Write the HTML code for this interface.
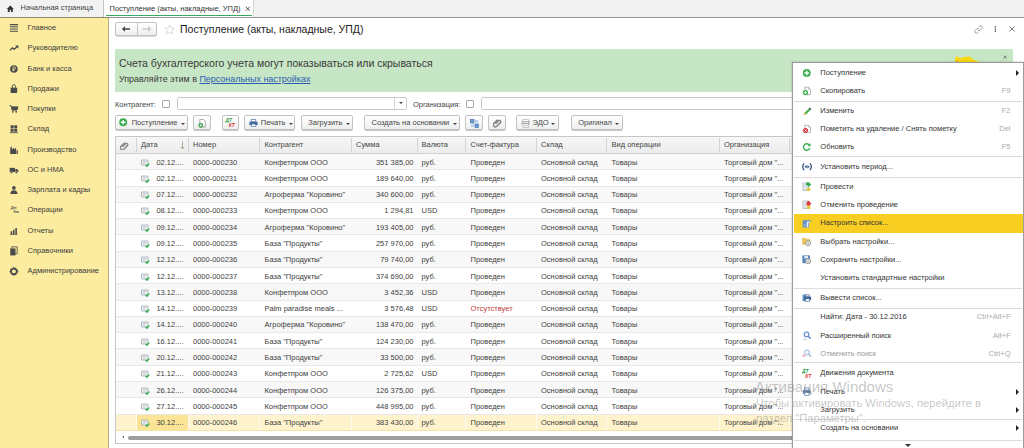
<!DOCTYPE html>
<html lang="ru"><head><meta charset="utf-8"><title>Поступление (акты, накладные, УПД)</title>
<style>
*{box-sizing:border-box;margin:0;padding:0}
html,body{width:1024px;height:448px;overflow:hidden;background:#fff}
body{position:relative;font-family:"Liberation Sans",sans-serif;font-size:7.5px;color:#333}
.abs{position:absolute}
.t{position:absolute;white-space:nowrap;line-height:10px;height:10px}
#tabs{left:0;top:0;width:1024px;height:17px;background:#f2f2f2}
#side{left:0;top:17px;width:109px;height:431px;background:#fbec9f;border-right:1px solid #b9ae7e}
#side .t{left:27.500px;color:#3b3b3b}
#topline{left:0;top:17px;width:1024px;height:1px;background:#969696}
.btn{position:absolute;height:14.500px;border:1px solid #c3c3c3;border-radius:2px;background:linear-gradient(#ffffff,#eeeeee);box-shadow:0 0.700px 0 #b0b0b0;}
.btn .t{top:2px;color:#444}
.car{position:absolute;top:7px;width:0;height:0;border-left:2px solid transparent;border-right:2px solid transparent;border-top:2.500px solid #444}
.inp{position:absolute;height:13px;border:1px solid #c9c9c9;border-radius:2px;background:#fff}
.cb{position:absolute;width:7.600px;height:7.600px;border:1px solid #a8a8a8;border-radius:1px;background:#fff}
#grid{left:115px;top:136px;width:909px;height:308px;border:1px solid #c6c6c6;background:#fff;overflow:hidden}
.row{position:absolute;left:0;width:909px;height:16.300px;border-bottom:1px solid #e8e8e8}
.row.o{background:#f8f8f8}
.row .t{top:3.600px;color:#404040}
.hd{position:absolute;left:0;top:0;width:909px;height:16.500px;background:linear-gradient(#f7f7f7,#ececec);border-bottom:1px solid #d2d2d2}
.hd .t{top:3px;color:#444}
.vs{position:absolute;top:1px;width:1px;height:14px;background:#d4d4d4}
#menu{left:792px;top:62px;width:231.500px;height:392px;background:#fff;border:1px solid #9c9c9c;box-shadow:0 0 2px rgba(0,0,0,.25)}
#menu .t{left:27.300px;color:#333}
#menu .k{position:absolute;right:12px;color:#aaa;white-space:nowrap;line-height:10px;height:10px}
.sep{position:absolute;left:1px;width:228px;height:1px;background:#dcdcdc}
.arr{position:absolute;left:222.600px;width:0;height:0;border-top:3px solid transparent;border-bottom:3px solid transparent;border-left:3.500px solid #222}
.wm{position:absolute;white-space:nowrap;color:rgba(135,135,135,.47)}
</style></head><body>

<div id="tabs" class="abs">
<svg class="abs" style="left:5.800px;top:4.600px" width="8.600" height="7.600" viewBox="0 0 10 10"><path d="M5 0.800L0.300 5.200h1.400v4h2.500V6.400h1.600v2.800h2.500v-4h1.400z" fill="#333"/></svg>
<div class="t" style="left:20.500px;top:3.300px;color:#444">Начальная страница</div>
<div class="abs" style="left:103px;top:0;width:151px;height:17px;background:#fff;border-left:1px solid #c4c4c4;border-right:1px solid #d4d4d4"></div>
<div class="abs" style="left:105.700px;top:15px;width:146px;height:1px;background:#35a862;z-index:3"></div>
<div class="t" style="left:109.500px;top:3.500px;color:#333">Поступление (акты, накладные, УПД)</div>
<svg class="abs" style="left:245px;top:5.800px" width="5.600" height="5.600" viewBox="0 0 7 7"><path d="M1 1l5 5M6 1l-5 5" stroke="#444" stroke-width="1.100"/></svg>
</div>
<div id="side" class="abs">
<svg class="abs" style="left:8.800px;top:6.0px" width="9.800" height="9.800" viewBox="0 0 12 12"><path d="M1 2h10M1 4.7h10M1 7.4h10M1 10h10" stroke="#4a4a4a" stroke-width="1.3" fill="none"/></svg>
<div class="t" style="top:6.0px">Главное</div>
<svg class="abs" style="left:8.800px;top:26.3px" width="9.800" height="9.800" viewBox="0 0 12 12"><path d="M1 9l3.2-3.2 2.2 2 3.8-4" stroke="#4a4a4a" stroke-width="1.5" fill="none"/><path d="M7.5 3h4v4z" fill="#4a4a4a"/></svg>
<div class="t" style="top:26.3px">Руководителю</div>
<svg class="abs" style="left:8.800px;top:46.5px" width="9.800" height="9.800" viewBox="0 0 12 12"><circle cx="6" cy="6" r="4.6" fill="#4a4a4a"/><path d="M5 9V3.6h1.6a1.4 1.4 0 0 1 0 2.8H4.2M4.2 7.7h2.6" stroke="#fbec9f" stroke-width="0.9" fill="none"/></svg>
<div class="t" style="top:46.5px">Банк и касса</div>
<svg class="abs" style="left:8.800px;top:66.8px" width="9.800" height="9.800" viewBox="0 0 12 12"><path d="M2 4.5h8v6.5h-8z" fill="#4a4a4a"/><path d="M4.2 5V2.6a1.8 1.8 0 0 1 3.6 0V5" stroke="#4a4a4a" stroke-width="1" fill="none"/></svg>
<div class="t" style="top:66.8px">Продажи</div>
<svg class="abs" style="left:8.800px;top:87.1px" width="9.800" height="9.800" viewBox="0 0 12 12"><path d="M0.5 2h2l1.2 5.5h6l1.3-4h-8" stroke="#4a4a4a" stroke-width="1.2" fill="none"/><path d="M3.3 3.7h7.5l-1.2 3.6h-5.6z" fill="#4a4a4a"/><circle cx="4.6" cy="9.6" r="1.1" fill="#4a4a4a"/><circle cx="8.8" cy="9.6" r="1.1" fill="#4a4a4a"/></svg>
<div class="t" style="top:87.1px">Покупки</div>
<svg class="abs" style="left:8.800px;top:107.3px" width="9.800" height="9.800" viewBox="0 0 12 12"><path d="M2 1.5h3.6v3.6h-3.6zM6.4 1.5h3.6v3.6h-3.6zM2 5.9h3.6v3.6h-3.6zM6.4 5.9h3.6v3.6h-3.6z" fill="#4a4a4a"/><path d="M1 10.6h10" stroke="#4a4a4a" stroke-width="1"/></svg>
<div class="t" style="top:107.3px">Склад</div>
<svg class="abs" style="left:8.800px;top:127.6px" width="9.800" height="9.800" viewBox="0 0 12 12"><path d="M1.5 11V3.5l2-2v4l2.6-2.2v2.2l2.6-2.2V11z" fill="#4a4a4a"/><path d="M9.2 11V6.5h1.6V11z" fill="#4a4a4a"/></svg>
<div class="t" style="top:127.6px">Производство</div>
<svg class="abs" style="left:8.800px;top:147.9px" width="9.800" height="9.800" viewBox="0 0 12 12"><path d="M0.8 3.5h6.6v5.2h-6.6z" fill="#4a4a4a"/><path d="M7.8 5h2.2l1.4 1.8v1.9h-3.6z" fill="#4a4a4a"/><circle cx="3" cy="9.2" r="1.3" fill="#4a4a4a" stroke="#fbec9f" stroke-width="0.5"/><circle cx="9" cy="9.2" r="1.3" fill="#4a4a4a" stroke="#fbec9f" stroke-width="0.5"/></svg>
<div class="t" style="top:147.9px">ОС и НМА</div>
<svg class="abs" style="left:8.800px;top:168.2px" width="9.800" height="9.800" viewBox="0 0 12 12"><circle cx="6" cy="3.6" r="2.3" fill="#4a4a4a"/><path d="M1.6 11c0-3 1.6-4.6 4.4-4.6s4.4 1.600 4.400 4.600z" fill="#4a4a4a"/></svg>
<div class="t" style="top:168.2px">Зарплата и кадры</div>
<svg class="abs" style="left:8.800px;top:188.4px" width="9.800" height="9.800" viewBox="0 0 12 12"><text x="2" y="5.500" font-size="4.600" font-weight="bold" font-style="italic" fill="#5a5a55" font-family="Liberation Sans, sans-serif">Дт</text><text x="5.500" y="10" font-size="4.600" font-weight="bold" font-style="italic" fill="#5a5a55" font-family="Liberation Sans, sans-serif">Кт</text></svg>
<div class="t" style="top:188.4px">Операции</div>
<svg class="abs" style="left:8.800px;top:208.7px" width="9.800" height="9.800" viewBox="0 0 12 12"><path d="M2 6.500h1.900v3.800h-1.900zM4.900 4.500h1.900v5.800h-1.900zM7.800 2.300h1.900v8h-1.900z" fill="#4a4a4a"/><path d="M1.300 10.600h9.200" stroke="#4a4a4a" stroke-width="0.900"/></svg>
<div class="t" style="top:208.7px">Отчеты</div>
<svg class="abs" style="left:8.800px;top:229.0px" width="9.800" height="9.800" viewBox="0 0 12 12"><path d="M3.500 1h6.500v8.500h-6.500z" fill="none" stroke="#4a4a4a" stroke-width="1"/><path d="M1.500 3h6.500v8.500h-6.500z" fill="#4a4a4a"/></svg>
<div class="t" style="top:229.0px">Справочники</div>
<svg class="abs" style="left:8.800px;top:249.2px" width="9.800" height="9.800" viewBox="0 0 12 12"><path d="M6 0.800l1 1.500 1.700-.5.300 1.800 1.800.3-.5 1.700 1.500 1-1.500 1 .5 1.700-1.800.3-.3 1.800-1.700-.5-1 1.500-1-1.500-1.700.5-.3-1.800-1.800-.3.5-1.700-1.500-1 1.500-1-.5-1.700 1.800-.3.300-1.800 1.700.5z" fill="#4a4a4a"/><circle cx="6" cy="6.600" r="2.400" fill="#fbec9f"/></svg>
<div class="t" style="top:249.2px">Администрирование</div>
</div>
<div id="topline" class="abs"></div><div class="abs" style="left:0;top:17px;width:109px;height:1px;background:#8e8868"></div>
<div class="btn" style="left:115px;top:22px;width:42px;height:14px;box-shadow:0 0.500px 0 #b5b5b5"></div>
<div class="abs" style="left:136.500px;top:23px;width:1px;height:12px;background:#c4c4c4"></div>
<svg class="abs" style="left:121px;top:25px" width="10" height="8" viewBox="0 0 10 8"><path d="M0.800 4l3.200-2.800v2h5v1.600H4v2z" fill="#4a4a4a"/></svg>
<svg class="abs" style="left:142px;top:25px" width="10" height="8" viewBox="0 0 10 8"><path d="M9.500 4l-3.500-3v2.300H0.500v1.400H6V7z" fill="#c9c9c9"/></svg>
<svg class="abs" style="left:164px;top:23.500px" width="11" height="11" viewBox="0 0 11 11"><path d="M5.500 0.800l1.400 3.100 3.400.4-2.500 2.300.7 3.300-3-1.700-3 1.700.7-3.300L0.700 4.300l3.400-.4z" fill="#fff" stroke="#d2d2d2" stroke-width="0.800"/></svg>
<div class="t" style="left:180px;top:22px;font-size:10.500px;line-height:14px;height:14px;color:#222">Поступление (акты, накладные, УПД)</div>
<svg class="abs" style="left:973.500px;top:25px" width="9" height="9" viewBox="0 0 10 10"><path d="M4.200 5.800a1.800 1.800 0 0 0 2.600 0l1.800-1.800a1.800 1.800 0 0 0-2.600-2.600l-.8.800M5.800 4.200a1.800 1.800 0 0 0-2.600 0L1.400 6a1.800 1.800 0 0 0 2.600 2.600l.8-.8" fill="none" stroke="#8a8a8a" stroke-width="0.900"/></svg>
<svg class="abs" style="left:993px;top:25px" width="4" height="9" viewBox="0 0 4 9"><rect x="1.700" y="1.300" width="1.300" height="1.300" fill="#555"/><rect x="1.700" y="3.500" width="1.300" height="1.300" fill="#555"/><rect x="1.700" y="5.700" width="1.300" height="1.300" fill="#555"/></svg>
<svg class="abs" style="left:1009px;top:26.300px" width="6" height="6" viewBox="0 0 7 7"><path d="M0.500 0.500l6 6M6.500 0.500l-6 6" stroke="#555" stroke-width="0.900"/></svg>
<div class="abs" style="left:115px;top:49px;width:897.500px;height:43px;background:#c7e6c5"></div>
<div class="t" style="left:119px;top:56px;font-size:10.500px;line-height:14px;height:14px;color:#3a3a3a">Счета бухгалтерского учета могут показываться или скрываться</div>
<div class="t" style="left:119px;top:72.500px;font-size:8.950px;line-height:12px;height:12px;color:#3a3a3a">Управляйте этим в <span style="color:#2a5db0;text-decoration:underline">Персональных настройках</span></div>
<svg class="abs" style="left:945px;top:55px" width="40" height="8" viewBox="0 0 40 8"><path d="M10 7.500V3.500c0-1.500 1.500-2 3-1.500l3 1.200 3-1.500 2 .3 2-.6 2 .3 3 2.500 3 1.500 5.500 1.800z" fill="#fbd811"/><circle cx="12" cy="6.500" r="1" fill="#f59a1b"/><circle cx="2.500" cy="7.300" r="0.700" fill="#f3d95a"/></svg>
<svg class="abs" style="left:1003px;top:55px" width="4.200" height="4.200" viewBox="0 0 5 5"><path d="M0.700 0.700l3.600 3.600M4.300 0.700L0.700 4.300" stroke="#666" stroke-width="1"/></svg>
<div class="t" style="left:115px;top:99.800px;color:#444">Контрагент:</div>
<div class="cb" style="left:162.400px;top:100.400px"></div>
<div class="inp" style="left:177px;top:97px;width:230px"></div>
<div class="abs" style="left:394px;top:98px;width:1px;height:11px;background:#d5d5d5"></div>
<div class="car" style="left:398.600px;top:102.300px;border-left-width:2px;border-right-width:2px;border-top-width:2.500px"></div>
<div class="t" style="left:413px;top:99.800px;color:#444">Организация:</div>
<div class="cb" style="left:466.400px;top:100.400px"></div>
<div class="inp" style="left:480.500px;top:97px;width:330px"></div>
<div class="btn" style="left:115px;top:115px;width:72.5px"><div class="t" style="left:15.7px">Поступление</div><div class="car" style="left:65px;top:6.500px"></div><svg class="abs" style="left:3.300px;top:2.300px" width="8.400" height="8.400" viewBox="0 0 8 8"><circle cx="4" cy="4" r="3.800" fill="#3aae4e"/><path d="M4 1.800v4.400M1.800 4h4.400" stroke="#fff" stroke-width="1.300"/></svg></div>
<div class="btn" style="left:193px;top:115px;width:17.5px"><svg class="abs" style="left:4px;top:3px" width="8.200" height="9" viewBox="0 0 9 10"><path d="M2 0.500h4l2 2v6.500h-6z" fill="#fff" stroke="#8a8a8a" stroke-width="0.800"/><circle cx="3" cy="7" r="2.600" fill="#2f9e44"/><path d="M3 5.600v2.800M1.600 7h2.800" stroke="#fff" stroke-width="0.900"/></svg></div>
<div class="btn" style="left:222px;top:115px;width:17px"><div class="abs" style="left:2.500px;top:2px;font-size:4.800px;line-height:5px;font-weight:bold;color:#2f9e44;font-style:italic">ДТ</div><div class="abs" style="left:5.800px;top:6.500px;font-size:4.800px;line-height:5px;font-weight:bold;color:#e03131;font-style:italic">КТ</div></div>
<div class="btn" style="left:244px;top:115px;width:51px"><div class="t" style="left:15.8px">Печать</div><div class="car" style="left:43.5px;top:6.500px"></div><svg class="abs" style="left:3.500px;top:2.800px" width="9" height="8.200" viewBox="0 0 10 9"><path d="M2.500 0.500h5v2.500h-5z" fill="#fff" stroke="#456a9c" stroke-width="0.800"/><path d="M0.500 3h9v3.800h-9z" fill="#456a9c"/><path d="M2.500 5.500h5v3h-5z" fill="#fff" stroke="#456a9c" stroke-width="0.800"/></svg></div>
<div class="btn" style="left:301px;top:115px;width:51.5px"><div class="t" style="left:6.2px">Загрузить</div><div class="car" style="left:43.7px;top:6.500px"></div></div>
<div class="btn" style="left:364px;top:115px;width:96px"><div class="t" style="left:6.5px">Создать на основании</div><div class="car" style="left:87.5px;top:6.500px"></div></div>
<div class="btn" style="left:465px;top:115px;width:17.5px"><svg class="abs" style="left:4px;top:2.500px" width="9" height="9" viewBox="0 0 9 9"><rect x="0.500" y="0.500" width="3.500" height="3.500" fill="#6f9bd1" stroke="#3b6aa8" stroke-width="0.600"/><rect x="5" y="5" width="3.500" height="3.500" fill="#6f9bd1" stroke="#3b6aa8" stroke-width="0.600"/><rect x="5" y="1" width="3" height="2.500" fill="#b7d0ee"/><rect x="1" y="5.500" width="3" height="2.500" fill="#b7d0ee"/></svg></div>
<div class="btn" style="left:488px;top:115px;width:17.5px"><svg class="abs" style="left:3.500px;top:2.300px" width="9.500" height="9.500" viewBox="0 0 9 9"><path d="M2.400 5.400l2.800-2.800a1.200 1.200 0 0 1 1.800 1.800L3.600 7.800a1.900 1.900 0 0 1-2.700-2.700L4.400 1.600" fill="none" stroke="#858585" stroke-width="1.400"/></svg></div>
<div class="btn" style="left:516px;top:115px;width:42.5px"><div class="t" style="left:15.5px">ЭДО</div><div class="car" style="left:34.2px;top:6.500px"></div><svg class="abs" style="left:3.500px;top:2.800px" width="9.500" height="9" viewBox="0 0 9.500 9"><path d="M2 0.500h5.500v8h-5.500z" fill="#fafafa" stroke="#b5b5b5" stroke-width="0.700"/><path d="M0.300 2.800h8.900M0.300 4.600h8.900" stroke="#9c9c9c" stroke-width="0.900"/><path d="M2.800 6.600h4" stroke="#b5b5b5" stroke-width="0.800"/></svg></div>
<div class="btn" style="left:571px;top:115px;width:51.5px"><div class="t" style="left:6.2px">Оригинал</div><div class="car" style="left:43.2px;top:6.500px"></div></div>
<div id="grid" class="abs">
<div class="hd">
<div class="t" style="left:25px">Дата</div>
<div class="t" style="left:77px">Номер</div>
<div class="t" style="left:148.5px">Контрагент</div>
<div class="t" style="left:240px">Сумма</div>
<div class="t" style="left:305.5px">Валюта</div>
<div class="t" style="left:354.5px">Счет-фактура</div>
<div class="t" style="left:425px">Склад</div>
<div class="t" style="left:495.5px">Вид операции</div>
<div class="t" style="left:608px">Организация</div>
<div class="vs" style="left:19.8px"></div>
<div class="vs" style="left:72px"></div>
<div class="vs" style="left:143px"></div>
<div class="vs" style="left:235px"></div>
<div class="vs" style="left:301.3px"></div>
<div class="vs" style="left:349px"></div>
<div class="vs" style="left:420px"></div>
<div class="vs" style="left:490px"></div>
<div class="vs" style="left:602.5px"></div>
<div class="vs" style="left:673px"></div>
<svg class="abs" style="left:3.500px;top:3.500px" width="9.500" height="9.500" viewBox="0 0 9 9"><path d="M2.400 5.400l2.800-2.800a1.200 1.200 0 0 1 1.800 1.800L3.600 7.800a1.900 1.900 0 0 1-2.700-2.700L4.400 1.600" fill="none" stroke="#8c8c8c" stroke-width="1.400"/></svg>
<svg class="abs" style="left:64px;top:4px" width="5" height="9" viewBox="0 0 5 9"><path d="M2.500 0.500v7M0.800 5.800l1.700 2 1.700-2" fill="none" stroke="#a09373" stroke-width="0.800"/></svg>
</div>
<div class="row o" style="top:17.00px">
<svg class="abs" style="left:25px;top:4.500px" width="9" height="9" viewBox="0 0 9 9"><path d="M0.500 1h6.500v5h-6.500z" fill="#f1f3f5" stroke="#97a3ae" stroke-width="0.700"/><path d="M1.800 2.700h3.800M1.800 4.200h2.500" stroke="#a3adb7" stroke-width="0.600"/><path d="M4.600 5.800l1.300 1.500 2.300-2.800" fill="none" stroke="#2fa84f" stroke-width="1.300"/></svg>
<div class="t" style="left:40.400px">02.12....</div>
<div class="t" style="left:77px">0000-000230</div>
<div class="t" style="left:148.500px">Конфетпром ООО</div>
<div class="t" style="left:235px;width:62.500px;text-align:right">351 385,00</div>
<div class="t" style="left:305.500px">руб.</div>
<div class="t" style="left:354.500px;color:#404040">Проведен</div>
<div class="t" style="left:425px">Основной склад</div>
<div class="t" style="left:495.500px">Товары</div>
<div class="t" style="left:608px">Торговый дом "...</div>
</div>
<div class="row" style="top:33.29px">
<svg class="abs" style="left:25px;top:4.500px" width="9" height="9" viewBox="0 0 9 9"><path d="M0.500 1h6.500v5h-6.500z" fill="#f1f3f5" stroke="#97a3ae" stroke-width="0.700"/><path d="M1.800 2.700h3.800M1.800 4.200h2.500" stroke="#a3adb7" stroke-width="0.600"/><path d="M4.600 5.800l1.300 1.500 2.300-2.800" fill="none" stroke="#2fa84f" stroke-width="1.300"/></svg>
<div class="t" style="left:40.400px">02.12....</div>
<div class="t" style="left:77px">0000-000231</div>
<div class="t" style="left:148.500px">Конфетпром ООО</div>
<div class="t" style="left:235px;width:62.500px;text-align:right">189 640,00</div>
<div class="t" style="left:305.500px">руб.</div>
<div class="t" style="left:354.500px;color:#404040">Проведен</div>
<div class="t" style="left:425px">Основной склад</div>
<div class="t" style="left:495.500px">Товары</div>
<div class="t" style="left:608px">Торговый дом "...</div>
</div>
<div class="row o" style="top:49.58px">
<svg class="abs" style="left:25px;top:4.500px" width="9" height="9" viewBox="0 0 9 9"><path d="M0.500 1h6.500v5h-6.500z" fill="#f1f3f5" stroke="#97a3ae" stroke-width="0.700"/><path d="M1.800 2.700h3.800M1.800 4.200h2.500" stroke="#a3adb7" stroke-width="0.600"/><path d="M4.600 5.800l1.300 1.500 2.300-2.800" fill="none" stroke="#2fa84f" stroke-width="1.300"/></svg>
<div class="t" style="left:40.400px">07.12....</div>
<div class="t" style="left:77px">0000-000232</div>
<div class="t" style="left:148.500px">Агроферма "Коровино"</div>
<div class="t" style="left:235px;width:62.500px;text-align:right">340 600,00</div>
<div class="t" style="left:305.500px">руб.</div>
<div class="t" style="left:354.500px;color:#404040">Проведен</div>
<div class="t" style="left:425px">Основной склад</div>
<div class="t" style="left:495.500px">Товары</div>
<div class="t" style="left:608px">Торговый дом "...</div>
</div>
<div class="row" style="top:65.87px">
<svg class="abs" style="left:25px;top:4.500px" width="9" height="9" viewBox="0 0 9 9"><path d="M0.500 1h6.500v5h-6.500z" fill="#f1f3f5" stroke="#97a3ae" stroke-width="0.700"/><path d="M1.800 2.700h3.800M1.800 4.200h2.500" stroke="#a3adb7" stroke-width="0.600"/><path d="M4.600 5.800l1.300 1.500 2.300-2.800" fill="none" stroke="#2fa84f" stroke-width="1.300"/></svg>
<div class="t" style="left:40.400px">08.12....</div>
<div class="t" style="left:77px">0000-000233</div>
<div class="t" style="left:148.500px">Конфетпром ООО</div>
<div class="t" style="left:235px;width:62.500px;text-align:right">1 294,81</div>
<div class="t" style="left:305.500px">USD</div>
<div class="t" style="left:354.500px;color:#404040">Проведен</div>
<div class="t" style="left:425px">Основной склад</div>
<div class="t" style="left:495.500px">Товары</div>
<div class="t" style="left:608px">Торговый дом "...</div>
</div>
<div class="row o" style="top:82.16px">
<svg class="abs" style="left:25px;top:4.500px" width="9" height="9" viewBox="0 0 9 9"><path d="M0.500 1h6.500v5h-6.500z" fill="#f1f3f5" stroke="#97a3ae" stroke-width="0.700"/><path d="M1.800 2.700h3.800M1.800 4.200h2.500" stroke="#a3adb7" stroke-width="0.600"/><path d="M4.600 5.800l1.300 1.500 2.300-2.800" fill="none" stroke="#2fa84f" stroke-width="1.300"/></svg>
<div class="t" style="left:40.400px">09.12....</div>
<div class="t" style="left:77px">0000-000234</div>
<div class="t" style="left:148.500px">Агроферма "Коровино"</div>
<div class="t" style="left:235px;width:62.500px;text-align:right">193 405,00</div>
<div class="t" style="left:305.500px">руб.</div>
<div class="t" style="left:354.500px;color:#404040">Проведен</div>
<div class="t" style="left:425px">Основной склад</div>
<div class="t" style="left:495.500px">Товары</div>
<div class="t" style="left:608px">Торговый дом "...</div>
</div>
<div class="row" style="top:98.45px">
<svg class="abs" style="left:25px;top:4.500px" width="9" height="9" viewBox="0 0 9 9"><path d="M0.500 1h6.500v5h-6.500z" fill="#f1f3f5" stroke="#97a3ae" stroke-width="0.700"/><path d="M1.800 2.700h3.800M1.800 4.200h2.500" stroke="#a3adb7" stroke-width="0.600"/><path d="M4.600 5.800l1.300 1.500 2.300-2.800" fill="none" stroke="#2fa84f" stroke-width="1.300"/></svg>
<div class="t" style="left:40.400px">09.12....</div>
<div class="t" style="left:77px">0000-000235</div>
<div class="t" style="left:148.500px">База "Продукты"</div>
<div class="t" style="left:235px;width:62.500px;text-align:right">257 970,00</div>
<div class="t" style="left:305.500px">руб.</div>
<div class="t" style="left:354.500px;color:#404040">Проведен</div>
<div class="t" style="left:425px">Основной склад</div>
<div class="t" style="left:495.500px">Товары</div>
<div class="t" style="left:608px">Торговый дом "...</div>
</div>
<div class="row o" style="top:114.74px">
<svg class="abs" style="left:25px;top:4.500px" width="9" height="9" viewBox="0 0 9 9"><path d="M0.500 1h6.500v5h-6.500z" fill="#f1f3f5" stroke="#97a3ae" stroke-width="0.700"/><path d="M1.800 2.700h3.800M1.800 4.200h2.500" stroke="#a3adb7" stroke-width="0.600"/><path d="M4.600 5.800l1.300 1.500 2.300-2.800" fill="none" stroke="#2fa84f" stroke-width="1.300"/></svg>
<div class="t" style="left:40.400px">12.12....</div>
<div class="t" style="left:77px">0000-000236</div>
<div class="t" style="left:148.500px">База "Продукты"</div>
<div class="t" style="left:235px;width:62.500px;text-align:right">79 740,00</div>
<div class="t" style="left:305.500px">руб.</div>
<div class="t" style="left:354.500px;color:#404040">Проведен</div>
<div class="t" style="left:425px">Основной склад</div>
<div class="t" style="left:495.500px">Товары</div>
<div class="t" style="left:608px">Торговый дом "...</div>
</div>
<div class="row" style="top:131.03px">
<svg class="abs" style="left:25px;top:4.500px" width="9" height="9" viewBox="0 0 9 9"><path d="M0.500 1h6.500v5h-6.500z" fill="#f1f3f5" stroke="#97a3ae" stroke-width="0.700"/><path d="M1.800 2.700h3.800M1.800 4.200h2.500" stroke="#a3adb7" stroke-width="0.600"/><path d="M4.600 5.800l1.300 1.500 2.300-2.800" fill="none" stroke="#2fa84f" stroke-width="1.300"/></svg>
<div class="t" style="left:40.400px">12.12....</div>
<div class="t" style="left:77px">0000-000237</div>
<div class="t" style="left:148.500px">База "Продукты"</div>
<div class="t" style="left:235px;width:62.500px;text-align:right">374 690,00</div>
<div class="t" style="left:305.500px">руб.</div>
<div class="t" style="left:354.500px;color:#404040">Проведен</div>
<div class="t" style="left:425px">Основной склад</div>
<div class="t" style="left:495.500px">Товары</div>
<div class="t" style="left:608px">Торговый дом "...</div>
</div>
<div class="row o" style="top:147.32px">
<svg class="abs" style="left:25px;top:4.500px" width="9" height="9" viewBox="0 0 9 9"><path d="M0.500 1h6.500v5h-6.500z" fill="#f1f3f5" stroke="#97a3ae" stroke-width="0.700"/><path d="M1.800 2.700h3.800M1.800 4.200h2.500" stroke="#a3adb7" stroke-width="0.600"/><path d="M4.600 5.800l1.300 1.500 2.300-2.800" fill="none" stroke="#2fa84f" stroke-width="1.300"/></svg>
<div class="t" style="left:40.400px">13.12....</div>
<div class="t" style="left:77px">0000-000238</div>
<div class="t" style="left:148.500px">Конфетпром ООО</div>
<div class="t" style="left:235px;width:62.500px;text-align:right">3 452,36</div>
<div class="t" style="left:305.500px">USD</div>
<div class="t" style="left:354.500px;color:#404040">Проведен</div>
<div class="t" style="left:425px">Основной склад</div>
<div class="t" style="left:495.500px">Товары</div>
<div class="t" style="left:608px">Торговый дом "...</div>
</div>
<div class="row" style="top:163.61px">
<svg class="abs" style="left:25px;top:4.500px" width="9" height="9" viewBox="0 0 9 9"><path d="M0.500 1h6.500v5h-6.500z" fill="#f1f3f5" stroke="#97a3ae" stroke-width="0.700"/><path d="M1.800 2.700h3.800M1.800 4.200h2.500" stroke="#a3adb7" stroke-width="0.600"/><path d="M4.600 5.800l1.300 1.500 2.300-2.800" fill="none" stroke="#2fa84f" stroke-width="1.300"/></svg>
<div class="t" style="left:40.400px">14.12....</div>
<div class="t" style="left:77px">0000-000239</div>
<div class="t" style="left:148.500px">Palm paradise meals ...</div>
<div class="t" style="left:235px;width:62.500px;text-align:right">3 576,48</div>
<div class="t" style="left:305.500px">USD</div>
<div class="t" style="left:354.500px;color:#c5383c">Отсутствует</div>
<div class="t" style="left:425px">Основной склад</div>
<div class="t" style="left:495.500px">Товары</div>
<div class="t" style="left:608px">Торговый дом "...</div>
</div>
<div class="row o" style="top:179.90px">
<svg class="abs" style="left:25px;top:4.500px" width="9" height="9" viewBox="0 0 9 9"><path d="M0.500 1h6.500v5h-6.500z" fill="#f1f3f5" stroke="#97a3ae" stroke-width="0.700"/><path d="M1.800 2.700h3.800M1.800 4.200h2.500" stroke="#a3adb7" stroke-width="0.600"/><path d="M4.600 5.800l1.300 1.500 2.300-2.800" fill="none" stroke="#2fa84f" stroke-width="1.300"/></svg>
<div class="t" style="left:40.400px">14.12....</div>
<div class="t" style="left:77px">0000-000240</div>
<div class="t" style="left:148.500px">Агроферма "Коровино"</div>
<div class="t" style="left:235px;width:62.500px;text-align:right">138 470,00</div>
<div class="t" style="left:305.500px">руб.</div>
<div class="t" style="left:354.500px;color:#404040">Проведен</div>
<div class="t" style="left:425px">Основной склад</div>
<div class="t" style="left:495.500px">Товары</div>
<div class="t" style="left:608px">Торговый дом "...</div>
</div>
<div class="row" style="top:196.19px">
<svg class="abs" style="left:25px;top:4.500px" width="9" height="9" viewBox="0 0 9 9"><path d="M0.500 1h6.500v5h-6.500z" fill="#f1f3f5" stroke="#97a3ae" stroke-width="0.700"/><path d="M1.800 2.700h3.800M1.800 4.200h2.500" stroke="#a3adb7" stroke-width="0.600"/><path d="M4.600 5.800l1.300 1.500 2.300-2.800" fill="none" stroke="#2fa84f" stroke-width="1.300"/></svg>
<div class="t" style="left:40.400px">16.12....</div>
<div class="t" style="left:77px">0000-000241</div>
<div class="t" style="left:148.500px">База "Продукты"</div>
<div class="t" style="left:235px;width:62.500px;text-align:right">124 230,00</div>
<div class="t" style="left:305.500px">руб.</div>
<div class="t" style="left:354.500px;color:#404040">Проведен</div>
<div class="t" style="left:425px">Основной склад</div>
<div class="t" style="left:495.500px">Товары</div>
<div class="t" style="left:608px">Торговый дом "...</div>
</div>
<div class="row o" style="top:212.48px">
<svg class="abs" style="left:25px;top:4.500px" width="9" height="9" viewBox="0 0 9 9"><path d="M0.500 1h6.500v5h-6.500z" fill="#f1f3f5" stroke="#97a3ae" stroke-width="0.700"/><path d="M1.800 2.700h3.800M1.800 4.200h2.500" stroke="#a3adb7" stroke-width="0.600"/><path d="M4.600 5.800l1.300 1.500 2.300-2.800" fill="none" stroke="#2fa84f" stroke-width="1.300"/></svg>
<div class="t" style="left:40.400px">20.12....</div>
<div class="t" style="left:77px">0000-000242</div>
<div class="t" style="left:148.500px">База "Продукты"</div>
<div class="t" style="left:235px;width:62.500px;text-align:right">33 500,00</div>
<div class="t" style="left:305.500px">руб.</div>
<div class="t" style="left:354.500px;color:#404040">Проведен</div>
<div class="t" style="left:425px">Основной склад</div>
<div class="t" style="left:495.500px">Товары</div>
<div class="t" style="left:608px">Торговый дом "...</div>
</div>
<div class="row" style="top:228.77px">
<svg class="abs" style="left:25px;top:4.500px" width="9" height="9" viewBox="0 0 9 9"><path d="M0.500 1h6.500v5h-6.500z" fill="#f1f3f5" stroke="#97a3ae" stroke-width="0.700"/><path d="M1.800 2.700h3.800M1.800 4.200h2.500" stroke="#a3adb7" stroke-width="0.600"/><path d="M4.600 5.800l1.300 1.500 2.300-2.800" fill="none" stroke="#2fa84f" stroke-width="1.300"/></svg>
<div class="t" style="left:40.400px">21.12....</div>
<div class="t" style="left:77px">0000-000243</div>
<div class="t" style="left:148.500px">Конфетпром ООО</div>
<div class="t" style="left:235px;width:62.500px;text-align:right">2 725,62</div>
<div class="t" style="left:305.500px">USD</div>
<div class="t" style="left:354.500px;color:#404040">Проведен</div>
<div class="t" style="left:425px">Основной склад</div>
<div class="t" style="left:495.500px">Товары</div>
<div class="t" style="left:608px">Торговый дом "...</div>
</div>
<div class="row o" style="top:245.06px">
<svg class="abs" style="left:25px;top:4.500px" width="9" height="9" viewBox="0 0 9 9"><path d="M0.500 1h6.500v5h-6.500z" fill="#f1f3f5" stroke="#97a3ae" stroke-width="0.700"/><path d="M1.800 2.700h3.800M1.800 4.200h2.500" stroke="#a3adb7" stroke-width="0.600"/><path d="M4.600 5.800l1.300 1.500 2.300-2.800" fill="none" stroke="#2fa84f" stroke-width="1.300"/></svg>
<div class="t" style="left:40.400px">26.12....</div>
<div class="t" style="left:77px">0000-000244</div>
<div class="t" style="left:148.500px">Конфетпром ООО</div>
<div class="t" style="left:235px;width:62.500px;text-align:right">126 375,00</div>
<div class="t" style="left:305.500px">руб.</div>
<div class="t" style="left:354.500px;color:#404040">Проведен</div>
<div class="t" style="left:425px">Основной склад</div>
<div class="t" style="left:495.500px">Товары</div>
<div class="t" style="left:608px">Торговый дом "...</div>
</div>
<div class="row" style="top:261.35px">
<svg class="abs" style="left:25px;top:4.500px" width="9" height="9" viewBox="0 0 9 9"><path d="M0.500 1h6.500v5h-6.500z" fill="#f1f3f5" stroke="#97a3ae" stroke-width="0.700"/><path d="M1.800 2.700h3.800M1.800 4.200h2.500" stroke="#a3adb7" stroke-width="0.600"/><path d="M4.600 5.800l1.300 1.500 2.300-2.800" fill="none" stroke="#2fa84f" stroke-width="1.300"/></svg>
<div class="t" style="left:40.400px">27.12....</div>
<div class="t" style="left:77px">0000-000245</div>
<div class="t" style="left:148.500px">Конфетпром ООО</div>
<div class="t" style="left:235px;width:62.500px;text-align:right">448 995,00</div>
<div class="t" style="left:305.500px">руб.</div>
<div class="t" style="left:354.500px;color:#404040">Проведен</div>
<div class="t" style="left:425px">Основной склад</div>
<div class="t" style="left:495.500px">Товары</div>
<div class="t" style="left:608px">Торговый дом "...</div>
</div>
<div class="row o" style="top:277.64px;background:#fff3cd;border-bottom-color:#f3e3a5">
<div class="abs" style="left:21px;top:0;width:51px;height:15.500px;background:#fbe496"></div>
<div class="abs" style="left:20px;top:0;width:1px;height:15.500px;background:rgba(255,255,255,.75)"></div>
<div class="abs" style="left:72px;top:0;width:1px;height:15.500px;background:rgba(255,255,255,.75)"></div>
<div class="abs" style="left:143px;top:0;width:1px;height:15.500px;background:rgba(255,255,255,.75)"></div>
<div class="abs" style="left:235px;top:0;width:1px;height:15.500px;background:rgba(255,255,255,.75)"></div>
<div class="abs" style="left:301.3px;top:0;width:1px;height:15.500px;background:rgba(255,255,255,.75)"></div>
<div class="abs" style="left:349px;top:0;width:1px;height:15.500px;background:rgba(255,255,255,.75)"></div>
<div class="abs" style="left:420px;top:0;width:1px;height:15.500px;background:rgba(255,255,255,.75)"></div>
<div class="abs" style="left:490px;top:0;width:1px;height:15.500px;background:rgba(255,255,255,.75)"></div>
<div class="abs" style="left:602.5px;top:0;width:1px;height:15.500px;background:rgba(255,255,255,.75)"></div>
<div class="abs" style="left:673px;top:0;width:1px;height:15.500px;background:rgba(255,255,255,.75)"></div>
<svg class="abs" style="left:25px;top:4.500px" width="9" height="9" viewBox="0 0 9 9"><path d="M0.500 1h6.500v5h-6.500z" fill="#f1f3f5" stroke="#97a3ae" stroke-width="0.700"/><path d="M1.800 2.700h3.800M1.800 4.200h2.500" stroke="#a3adb7" stroke-width="0.600"/><path d="M4.600 5.800l1.300 1.500 2.300-2.800" fill="none" stroke="#2fa84f" stroke-width="1.300"/></svg>
<div class="t" style="left:40.400px">30.12....</div>
<div class="t" style="left:77px">0000-000246</div>
<div class="t" style="left:148.500px">База "Продукты"</div>
<div class="t" style="left:235px;width:62.500px;text-align:right">383 430,00</div>
<div class="t" style="left:305.500px">руб.</div>
<div class="t" style="left:354.500px;color:#404040">Проведен</div>
<div class="t" style="left:425px">Основной склад</div>
<div class="t" style="left:495.500px">Товары</div>
<div class="t" style="left:608px">Торговый дом "...</div>
</div>
<div class="abs" style="left:0;top:294.500px;width:909px;height:13px;background:#fff"></div>
<div class="abs" style="left:5.500px;top:298.800px;width:0;height:0;border-top:1.700px solid transparent;border-bottom:1.700px solid transparent;border-right:2.200px solid #444"></div>
<div class="abs" style="left:12px;top:298.500px;width:700px;height:4px;border-radius:2px;background:#9e9e9e"></div>
</div>
<div id="menu" class="abs">
<svg class="abs" style="left:9.400px;top:4.9px" width="9.500" height="9.500" viewBox="0 0 10 10"><circle cx="5" cy="5.200" r="4.100" fill="#3aae4e"/><path d="M5 2.800v4.800M2.600 5.200h4.800" stroke="#fff" stroke-width="1.500"/></svg>
<div class="t" style="top:4.7px;color:#333">Поступление</div>
<div class="arr" style="top:6.5px"></div>
<svg class="abs" style="left:9.400px;top:23.4px" width="9.500" height="9.500" viewBox="0 0 10 10"><path d="M3 1.300h3.800l2 2v5.900h-5.800z" fill="#fff" stroke="#9aa0a6" stroke-width="0.800"/><path d="M6.800 1.300v2h2" fill="none" stroke="#9aa0a6" stroke-width="0.600"/><circle cx="3.700" cy="6.900" r="2.700" fill="#3aae4e"/><path d="M3.700 5.400v3M2.200 6.900h3" stroke="#fff" stroke-width="1"/></svg>
<div class="t" style="top:23.2px;color:#333">Скопировать</div>
<div class="k" style="top:23.2px">F9</div>
<div class="sep" style="top:37.5px"></div>
<svg class="abs" style="left:9.400px;top:42.6px" width="9.500" height="9.500" viewBox="0 0 10 10"><path d="M2.600 7.200l4.600-4.600 1.700 1.700-4.600 4.600z" fill="#4caf50"/><path d="M1.500 9.400l1.100-2.200 1.700 1.700z" fill="#e8a33d"/><path d="M7.200 2.600l.9-.9 1.700 1.700-.9.900z" fill="#3c3c3c"/></svg>
<div class="t" style="top:42.5px;color:#333">Изменить</div>
<div class="k" style="top:42.5px">F2</div>
<svg class="abs" style="left:9.400px;top:60.7px" width="9.500" height="9.500" viewBox="0 0 10 10"><path d="M3 1.300h3.800l2 2v5.900h-5.800z" fill="#fff" stroke="#9aa0a6" stroke-width="0.800"/><path d="M6.800 1.300v2h2" fill="none" stroke="#9aa0a6" stroke-width="0.600"/><circle cx="3.700" cy="6.900" r="2.700" fill="#d9363e"/><path d="M2.600 5.800l2.200 2.200M4.800 5.800l-2.200 2.200" stroke="#fff" stroke-width="0.900"/></svg>
<div class="t" style="top:60.5px;color:#333">Пометить на удаление / Снять пометку</div>
<div class="k" style="top:60.5px">Del</div>
<svg class="abs" style="left:9.400px;top:79.4px" width="9.500" height="9.500" viewBox="0 0 10 10"><path d="M7.800 3.300A3.400 3.400 0 1 0 8.300 6.200" fill="none" stroke="#3aae4e" stroke-width="1.400"/><path d="M9 1.200v3.200h-3.200z" fill="#3aae4e"/></svg>
<div class="t" style="top:79.2px;color:#333">Обновить</div>
<div class="k" style="top:79.2px">F5</div>
<div class="sep" style="top:93.2px"></div>
<svg class="abs" style="left:9.400px;top:99.2px" width="9.500" height="9.500" viewBox="0 0 10 10"><path d="M2.300 1.400a5.500 5.500 0 0 0 0 7.200M8.300 1.400a5.500 5.500 0 0 1 0 7.200" fill="none" stroke="#2d4f80" stroke-width="1.300"/><path d="M4.900 3.200v3.600l-2.300-1.800zM5.700 3.200v3.600l2.300-1.800z" fill="#2d4f80"/></svg>
<div class="t" style="top:99.0px;color:#333">Установить период...</div>
<div class="sep" style="top:113.5px"></div>
<svg class="abs" style="left:9.400px;top:118.9px" width="9.500" height="9.500" viewBox="0 0 10 10"><path d="M1 1h5.600v7.800h-5.600z" fill="#fbfcfd" stroke="#8fa0b3" stroke-width="0.700"/><path d="M1.800 2.800h4M1.800 4.400h4M1.800 6h4M1.800 7.600h3" stroke="#a9b6c4" stroke-width="0.600"/><path d="M4.400 0.600h3.300l1.900 2.300-3 2.700v-1.800h-2.200z" fill="#2fa84f"/><ellipse cx="7" cy="7.800" rx="1.900" ry="1.900" fill="#e9c53c"/></svg>
<div class="t" style="top:118.7px;color:#333">Провести</div>
<svg class="abs" style="left:9.400px;top:136.9px" width="9.500" height="9.500" viewBox="0 0 10 10"><path d="M1 1h5.600v7.800h-5.600z" fill="#fbfcfd" stroke="#8fa0b3" stroke-width="0.700"/><path d="M1.800 2.800h4M1.800 4.400h4M1.800 6h4M1.800 7.600h3" stroke="#a9b6c4" stroke-width="0.600"/><path d="M6.800 0.400l3 3.200-1.600 2.400h-2.600l-1.200-2.600z" fill="#dc3a3f"/><ellipse cx="7" cy="7.800" rx="1.900" ry="1.900" fill="#e9c53c"/></svg>
<div class="t" style="top:136.7px;color:#333">Отменить проведение</div>
<div class="abs" style="left:1px;top:151.2px;width:228.500px;height:18.400px;background:#f9ce23"></div>
<svg class="abs" style="left:9.400px;top:155.7px" width="9.500" height="9.500" viewBox="0 0 10 10"><path d="M0.800 1.200h9.200l-2.600 2.800v5h-6.600z" fill="#5b8fcf"/><path d="M5 2.800l3.600-0.600-2 2.400v4h-1.600z" fill="#eef3f9"/><path d="M1.600 5.500h2.600M1.600 7.200h2.600" stroke="#c9daf0" stroke-width="0.600"/></svg>
<div class="t" style="top:155.4px;color:#333">Настроить список...</div>
<svg class="abs" style="left:9.400px;top:174.2px" width="9.500" height="9.500" viewBox="0 0 10 10"><path d="M0.600 1.300h3l.8 1h3.800v5.300h-7.600z" fill="#f0c95a" stroke="#c9a035" stroke-width="0.500"/><circle cx="6.400" cy="6.600" r="2.700" fill="#f2f2f2" stroke="#7b7b7b" stroke-width="0.800"/><circle cx="6.400" cy="6.600" r="0.900" fill="#8a8a8a"/></svg>
<div class="t" style="top:173.9px;color:#333">Выбрать настройки...</div>
<svg class="abs" style="left:9.400px;top:192.2px" width="9.500" height="9.500" viewBox="0 0 10 10"><path d="M0.800 0.800h7.200v7.400h-7.200z" fill="#5785c2" stroke="#3e6aa6" stroke-width="0.600"/><path d="M2.400 0.900h4v2.800h-4z" fill="#e4ecf7"/><circle cx="6.400" cy="6.600" r="2.700" fill="#f2f2f2" stroke="#7b7b7b" stroke-width="0.800"/><circle cx="6.400" cy="6.600" r="0.900" fill="#8a8a8a"/></svg>
<div class="t" style="top:191.9px;color:#333">Сохранить настройки...</div>
<div class="t" style="top:210.2px;color:#333">Установить стандартные настройки</div>
<div class="sep" style="top:224.8px"></div>
<svg class="abs" style="left:9.400px;top:230.2px" width="9.500" height="9.500" viewBox="0 0 10 10"><path d="M0.600 1.600h5v7h-5z" fill="#5b8fcf"/><path d="M3.600 2h4.400v2h-4.400z" fill="#fff" stroke="#3e5f8f" stroke-width="0.700"/><path d="M2.200 3.900h7.400v3.400h-7.400z" fill="#3e5f8f"/><path d="M3.600 6h4.400v2.800h-4.400z" fill="#fff" stroke="#3e5f8f" stroke-width="0.700"/></svg>
<div class="t" style="top:229.9px;color:#333">Вывести список...</div>
<div class="sep" style="top:244.5px"></div>
<div class="t" style="top:249.4px;color:#333">Найти: Дата - 30.12.2016</div>
<div class="k" style="top:249.4px">Ctrl+Alt+F</div>
<svg class="abs" style="left:9.400px;top:267.9px" width="9.500" height="9.500" viewBox="0 0 10 10"><circle cx="4.800" cy="3.600" r="2.500" fill="#eef4fb" stroke="#5a8ac6" stroke-width="1.100"/><path d="M6.700 5.500l2.400 2.700" stroke="#5a8ac6" stroke-width="1.400"/><path d="M1.500 8.800h3.500" stroke="#5a8ac6" stroke-width="0.800" stroke-dasharray="0.900 0.500"/></svg>
<div class="t" style="top:267.7px;color:#333">Расширенный поиск</div>
<div class="k" style="top:267.7px">Alt+F</div>
<svg class="abs" style="left:9.400px;top:285.9px" width="9.500" height="9.500" viewBox="0 0 10 10"><g opacity="0.550"><circle cx="5.200" cy="3.600" r="2.500" fill="#eef4fb" stroke="#5a8ac6" stroke-width="1.100"/><path d="M7.100 5.500l2.400 2.700" stroke="#5a8ac6" stroke-width="1.400"/><path d="M0.800 5.800l2.600 2.600M3.400 5.800L0.800 8.400M0.600 7.100h3" stroke="#e0444a" stroke-width="0.800"/></g></svg>
<div class="t" style="top:285.7px;color:#9a9a9a">Отменить поиск</div>
<div class="k" style="top:285.7px">Ctrl+Q</div>
<div class="sep" style="top:299.2px"></div>
<svg class="abs" style="left:9.400px;top:305.6px" width="9.500" height="9.500" viewBox="0 0 10 10"><text x="0" y="4.500" font-size="5.200" font-weight="bold" font-style="italic" fill="#2f9e44" font-family="Liberation Sans, sans-serif">ДТ</text><text x="3.300" y="9.600" font-size="5.200" font-weight="bold" font-style="italic" fill="#e03131" font-family="Liberation Sans, sans-serif">КТ</text></svg>
<div class="t" style="top:305.4px;color:#333">Движения документа</div>
<svg class="abs" style="left:9.400px;top:323.9px" width="9.500" height="9.500" viewBox="0 0 10 10"><path d="M2.600 1h4.800v2.400h-4.800z" fill="#fff" stroke="#5d7ea8" stroke-width="0.800"/><path d="M0.900 3.300h8.200v3.800h-8.200z" fill="#5d7ea8"/><path d="M2.600 5.800h4.800v3h-4.800z" fill="#fff" stroke="#5d7ea8" stroke-width="0.800"/></svg>
<div class="t" style="top:323.7px;color:#333">Печать</div>
<div class="arr" style="top:325.5px"></div>
<div class="t" style="top:341.7px;color:#333">Загрузить</div>
<div class="arr" style="top:343.5px"></div>
<div class="sep" style="top:356.2px"></div>
<div class="t" style="top:360.4px;color:#333">Создать на основании</div>
<div class="arr" style="top:362.2px"></div>
<div class="sep" style="top:377.2px"></div>
<div class="abs" style="left:112px;top:381px;width:0;height:0;border-left:3px solid transparent;border-right:3px solid transparent;border-top:3px solid #333"></div>
</div>
<div class="wm" style="left:755px;top:378px;font-size:15px;line-height:18px">Активация Windows</div>
<div class="wm" style="left:756px;top:396.200px;font-size:11.200px;line-height:14px">Чтобы активировать Windows, перейдите в</div>
<div class="wm" style="left:756px;top:410.800px;font-size:11.200px;line-height:14px">раздел "Параметры".</div>
</body></html>
